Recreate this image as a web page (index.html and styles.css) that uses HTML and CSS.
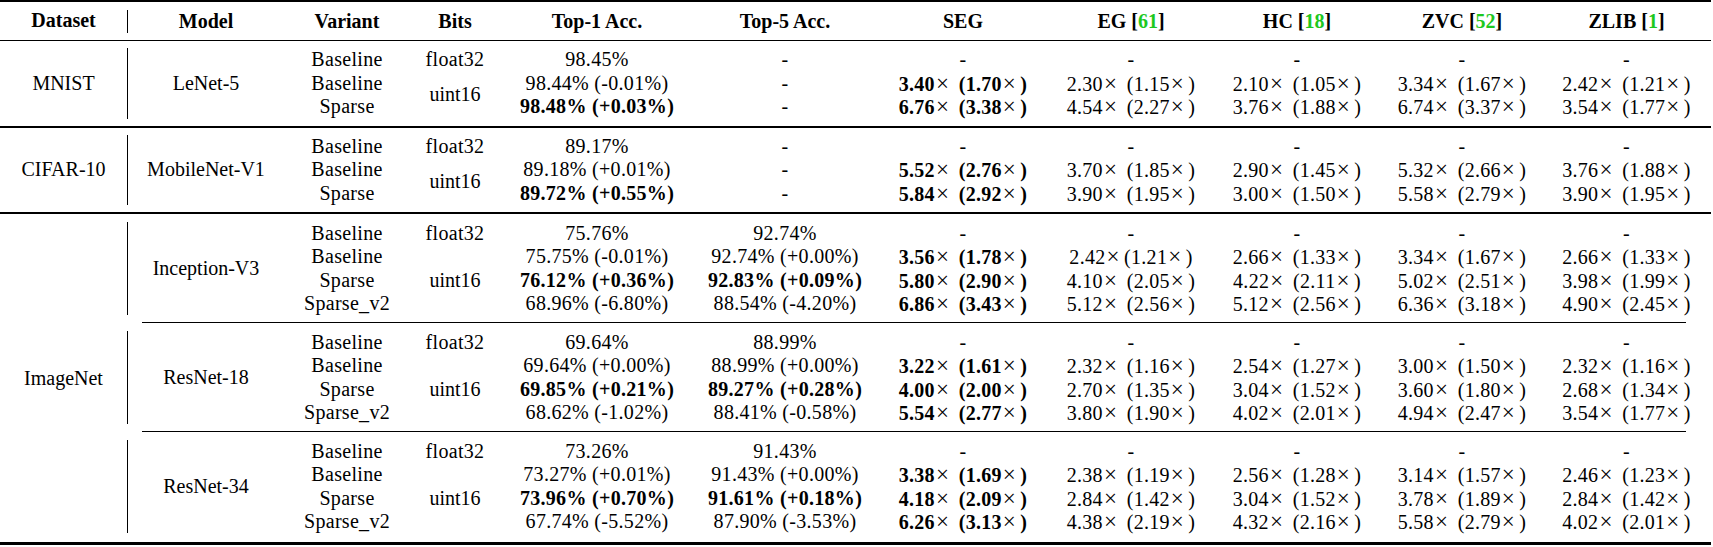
FILE: index.html
```html
<!DOCTYPE html>
<html>
<head>
<meta charset="utf-8">
<link rel="stylesheet" href="styles.css">
</head>
<body>
<div class="table">
  <div class="thead">
    <div class="ds">Dataset</div>
    <div class="pad">
      <div class="cols head">
        <div>Model</div><div>Variant</div><div>Bits</div><div>Top-1 Acc.</div><div>Top-5 Acc.</div><div>SEG</div>
        <div>EG [<span class="cite">61</span>]</div><div>HC [<span class="cite">18</span>]</div><div>ZVC [<span class="cite">52</span>]</div><div>ZLIB [<span class="cite">1</span>]</div>
      </div>
    </div>
  </div>

  <div class="sect">
    <div class="ds">MNIST</div>
    <div class="groups">
      <div class="pad">
        <div class="cols body r3">
          <div class="model">LeNet-5</div><div class="u16">uint16</div>
          <div>Baseline</div><div>float32</div><div>98.45%</div><div>-</div><div>-</div><div>-</div><div>-</div><div>-</div><div>-</div>
          <div>Baseline</div><div>98.44% (-0.01%)</div><div>-</div><div><b>3.40<span class="x">×</span> (1.70<span class="x">×</span>)</b></div><div>2.30<span class="x">×</span> (1.15<span class="x">×</span>)</div><div>2.10<span class="x">×</span> (1.05<span class="x">×</span>)</div><div>3.34<span class="x">×</span> (1.67<span class="x">×</span>)</div><div>2.42<span class="x">×</span> (1.21<span class="x">×</span>)</div>
          <div>Sparse</div><div><b>98.48% (+0.03%)</b></div><div>-</div><div><b>6.76<span class="x">×</span> (3.38<span class="x">×</span>)</b></div><div>4.54<span class="x">×</span> (2.27<span class="x">×</span>)</div><div>3.76<span class="x">×</span> (1.88<span class="x">×</span>)</div><div>6.74<span class="x">×</span> (3.37<span class="x">×</span>)</div><div>3.54<span class="x">×</span> (1.77<span class="x">×</span>)</div>
        </div>
      </div>
    </div>
  </div>

  <div class="sect">
    <div class="ds">CIFAR-10</div>
    <div class="groups">
      <div class="pad">
        <div class="cols body r3">
          <div class="model">MobileNet-V1</div><div class="u16">uint16</div>
          <div>Baseline</div><div>float32</div><div>89.17%</div><div>-</div><div>-</div><div>-</div><div>-</div><div>-</div><div>-</div>
          <div>Baseline</div><div>89.18% (+0.01%)</div><div>-</div><div><b>5.52<span class="x">×</span> (2.76<span class="x">×</span>)</b></div><div>3.70<span class="x">×</span> (1.85<span class="x">×</span>)</div><div>2.90<span class="x">×</span> (1.45<span class="x">×</span>)</div><div>5.32<span class="x">×</span> (2.66<span class="x">×</span>)</div><div>3.76<span class="x">×</span> (1.88<span class="x">×</span>)</div>
          <div>Sparse</div><div><b>89.72% (+0.55%)</b></div><div>-</div><div><b>5.84<span class="x">×</span> (2.92<span class="x">×</span>)</b></div><div>3.90<span class="x">×</span> (1.95<span class="x">×</span>)</div><div>3.00<span class="x">×</span> (1.50<span class="x">×</span>)</div><div>5.58<span class="x">×</span> (2.79<span class="x">×</span>)</div><div>3.90<span class="x">×</span> (1.95<span class="x">×</span>)</div>
        </div>
      </div>
    </div>
  </div>

  <div class="sect last">
    <div class="ds">ImageNet</div>
    <div class="groups">
      <div class="pad">
        <div class="cols body r4">
          <div class="model">Inception-V3</div><div class="u16">uint16</div>
          <div>Baseline</div><div>float32</div><div>75.76%</div><div>92.74%</div><div>-</div><div>-</div><div>-</div><div>-</div><div>-</div>
          <div>Baseline</div><div>75.75% (-0.01%)</div><div>92.74% (+0.00%)</div><div><b>3.56<span class="x">×</span> (1.78<span class="x">×</span>)</b></div><div>2.42<span class="x">×</span>(1.21<span class="x">×</span>)</div><div>2.66<span class="x">×</span> (1.33<span class="x">×</span>)</div><div>3.34<span class="x">×</span> (1.67<span class="x">×</span>)</div><div>2.66<span class="x">×</span> (1.33<span class="x">×</span>)</div>
          <div>Sparse</div><div><b>76.12% (+0.36%)</b></div><div><b>92.83% (+0.09%)</b></div><div><b>5.80<span class="x">×</span> (2.90<span class="x">×</span>)</b></div><div>4.10<span class="x">×</span> (2.05<span class="x">×</span>)</div><div>4.22<span class="x">×</span> (2.11<span class="x">×</span>)</div><div>5.02<span class="x">×</span> (2.51<span class="x">×</span>)</div><div>3.98<span class="x">×</span> (1.99<span class="x">×</span>)</div>
          <div>Sparse_v2</div><div>68.96% (-6.80%)</div><div>88.54% (-4.20%)</div><div><b>6.86<span class="x">×</span> (3.43<span class="x">×</span>)</b></div><div>5.12<span class="x">×</span> (2.56<span class="x">×</span>)</div><div>5.12<span class="x">×</span> (2.56<span class="x">×</span>)</div><div>6.36<span class="x">×</span> (3.18<span class="x">×</span>)</div><div>4.90<span class="x">×</span> (2.45<span class="x">×</span>)</div>
        </div>
      </div>
      <div class="cmid"></div>
      <div class="pad">
        <div class="cols body r4">
          <div class="model">ResNet-18</div><div class="u16">uint16</div>
          <div>Baseline</div><div>float32</div><div>69.64%</div><div>88.99%</div><div>-</div><div>-</div><div>-</div><div>-</div><div>-</div>
          <div>Baseline</div><div>69.64% (+0.00%)</div><div>88.99% (+0.00%)</div><div><b>3.22<span class="x">×</span> (1.61<span class="x">×</span>)</b></div><div>2.32<span class="x">×</span> (1.16<span class="x">×</span>)</div><div>2.54<span class="x">×</span> (1.27<span class="x">×</span>)</div><div>3.00<span class="x">×</span> (1.50<span class="x">×</span>)</div><div>2.32<span class="x">×</span> (1.16<span class="x">×</span>)</div>
          <div>Sparse</div><div><b>69.85% (+0.21%)</b></div><div><b>89.27% (+0.28%)</b></div><div><b>4.00<span class="x">×</span> (2.00<span class="x">×</span>)</b></div><div>2.70<span class="x">×</span> (1.35<span class="x">×</span>)</div><div>3.04<span class="x">×</span> (1.52<span class="x">×</span>)</div><div>3.60<span class="x">×</span> (1.80<span class="x">×</span>)</div><div>2.68<span class="x">×</span> (1.34<span class="x">×</span>)</div>
          <div>Sparse_v2</div><div>68.62% (-1.02%)</div><div>88.41% (-0.58%)</div><div><b>5.54<span class="x">×</span> (2.77<span class="x">×</span>)</b></div><div>3.80<span class="x">×</span> (1.90<span class="x">×</span>)</div><div>4.02<span class="x">×</span> (2.01<span class="x">×</span>)</div><div>4.94<span class="x">×</span> (2.47<span class="x">×</span>)</div><div>3.54<span class="x">×</span> (1.77<span class="x">×</span>)</div>
        </div>
      </div>
      <div class="cmid"></div>
      <div class="pad end">
        <div class="cols body r4">
          <div class="model">ResNet-34</div><div class="u16">uint16</div>
          <div>Baseline</div><div>float32</div><div>73.26%</div><div>91.43%</div><div>-</div><div>-</div><div>-</div><div>-</div><div>-</div>
          <div>Baseline</div><div>73.27% (+0.01%)</div><div>91.43% (+0.00%)</div><div><b>3.38<span class="x">×</span> (1.69<span class="x">×</span>)</b></div><div>2.38<span class="x">×</span> (1.19<span class="x">×</span>)</div><div>2.56<span class="x">×</span> (1.28<span class="x">×</span>)</div><div>3.14<span class="x">×</span> (1.57<span class="x">×</span>)</div><div>2.46<span class="x">×</span> (1.23<span class="x">×</span>)</div>
          <div>Sparse</div><div><b>73.96% (+0.70%)</b></div><div><b>91.61% (+0.18%)</b></div><div><b>4.18<span class="x">×</span> (2.09<span class="x">×</span>)</b></div><div>2.84<span class="x">×</span> (1.42<span class="x">×</span>)</div><div>3.04<span class="x">×</span> (1.52<span class="x">×</span>)</div><div>3.78<span class="x">×</span> (1.89<span class="x">×</span>)</div><div>2.84<span class="x">×</span> (1.42<span class="x">×</span>)</div>
          <div>Sparse_v2</div><div>67.74% (-5.52%)</div><div>87.90% (-3.53%)</div><div><b>6.26<span class="x">×</span> (3.13<span class="x">×</span>)</b></div><div>4.38<span class="x">×</span> (2.19<span class="x">×</span>)</div><div>4.32<span class="x">×</span> (2.16<span class="x">×</span>)</div><div>5.58<span class="x">×</span> (2.79<span class="x">×</span>)</div><div>4.02<span class="x">×</span> (2.01<span class="x">×</span>)</div>
        </div>
      </div>
    </div>
  </div>
</div>
</body>
</html>
```

FILE: styles.css
```css
html, body {
  margin: 0;
  padding: 0;
  background: #fff;
}

body {
  font-family: "Liberation Serif", "Times New Roman", serif;
  font-size: 20px;
  color: #000;
}

.table {
  width: 1711px;
  border-top: 2px solid #000;
  --cols: 156px 126px 90px 194px 182px 174px 162px 170px 160px 169px;
  --row: 23.4px;
}

.thead,
.sect {
  display: grid;
  grid-template-columns: 127px 1fr;
}

.thead {
  border-bottom: 1px solid #000;
  font-weight: bold;
}

.sect {
  border-bottom: 2px solid #000;
}

.sect.last {
  border-bottom-width: 3px;
}

.ds {
  align-self: center;
  text-align: center;
  line-height: var(--row);
}

.pad {
  padding: 7.5px 0 7px 0;
}

.pad.end {
  padding-bottom: 9px;
}

.cols {
  display: grid;
  grid-template-columns: var(--cols);
  grid-auto-rows: var(--row);
  border-left: 1px solid #000;
  line-height: var(--row);
  text-align: center;
  white-space: nowrap;
}

.body > div:nth-child(n+3) {
  letter-spacing: 0.3px;
}

.r3 {
  grid-template-rows: repeat(3, var(--row));
}

.r4 {
  grid-template-rows: repeat(4, var(--row));
}

.model {
  grid-column: 1;
  grid-row: 1 / -1;
  align-self: center;
}

.u16 {
  grid-column: 3;
  grid-row: 2 / -1;
  align-self: center;
}

.x {
  font-weight: normal;
  font-size: 23px;
  line-height: 1;
  margin: 0 4.5px 0 1px;
  letter-spacing: 0;
}

.cite {
  color: #1ec81e;
}

.cmid {
  height: 1px;
  background: #000;
  margin: 0 25px 0 15px;
}
```
